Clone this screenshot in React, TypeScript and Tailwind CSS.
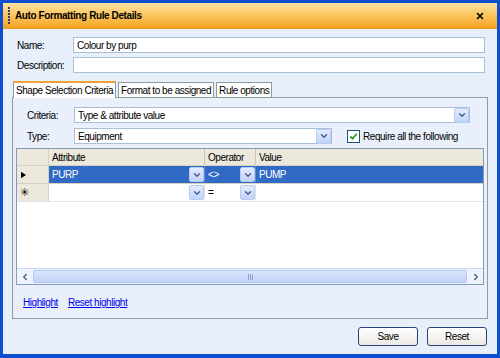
import { ChevronDown, ChevronLeft, ChevronRight, X } from 'lucide-react'

function DropBtn() {
  return (
    <div className="w-[15px] h-[15px] shrink-0 flex items-center justify-center bg-gradient-to-b from-[#e3ecfd] to-[#c1d3fb] border border-[#b7cbf5] rounded-[2px]">
      <ChevronDown className="w-[10px] h-[10px] text-[#4d6185]" strokeWidth={3.5} />
    </div>
  )
}

function Field({ label, value }: { label: string; value: string }) {
  return (
    <div className="flex items-center h-[16px]">
      <span className="w-[56px] shrink-0 whitespace-nowrap">{label}</span>
      <div className="flex-1 h-[16px] bg-white border border-[#a9bfd6] flex items-center pl-[3px]">
        <span className="flex-1">{value}</span>
      </div>
    </div>
  )
}

export default function App() {
  return (
    <div
      className="w-[500px] h-[358px] bg-[#0d4fd0] p-[3px] pb-[4px] text-[10px] tracking-[-0.45px] text-black"
      style={{ fontFamily: '"Liberation Sans", Arial, sans-serif' }}
    >
      <div className="h-full flex flex-col bg-[#e7effb]">
        {/* barra de titulo */}
        <div className="h-[26px] shrink-0 flex items-center bg-gradient-to-b from-[#fee3a0] via-[#fbc45a] to-[#f3a41e] border-b border-[#e39a22] pl-[5px] pr-[12px]">
          <div className="flex flex-col gap-[1px] mr-[5px]">
            {[0, 1, 2, 3, 4, 5].map((i) => (
              <div key={i} className="w-[2px] h-[2px] bg-[#3a3a78]" />
            ))}
          </div>
          <span className="font-bold flex-1 text-[10px] tracking-[-0.4px]">Auto Formatting Rule Details</span>
          <X className="w-[10px] h-[10px]" strokeWidth={4} />
        </div>

        <div className="flex-1 flex flex-col px-[9px] pt-[8px] pb-[8px]">
          <div className="flex flex-col gap-[4px] pl-[5px] pr-[3px]">
            <Field label="Name:" value="Colour by purp" />
            <Field label="Description:" value="" />
          </div>

          {/* abas */}
          <div className="flex items-end mt-[7px] h-[17px] pl-[1px]">
            <div className="h-[17px] px-[2px] bg-white border border-[#919b9c] border-b-0 border-t-[2px] border-t-[#f0a336] flex items-center relative z-10 -mb-px whitespace-nowrap">
              Shape Selection Criteria
            </div>
            <div className="h-[15px] px-[2px] ml-[2px] bg-white border border-[#919b9c] border-b-0 flex items-center whitespace-nowrap">
              Format to be assigned
            </div>
            <div className="h-[15px] px-[2px] ml-[2px] bg-white border border-[#919b9c] border-b-0 flex items-center whitespace-nowrap">
              Rule options
            </div>
          </div>

          <div className="flex-1 border border-[#919b9c] bg-[#e9f0fb] flex flex-col px-[3px] pt-[9px] pb-[8px]">
            <div className="pl-[11px] pr-[14px]">
              <div className="flex items-center h-[16px]">
                <span className="w-[47px] shrink-0">Criteria:</span>
                <div className="flex-1 h-[16px] bg-white border border-[#a9bfd6] flex items-center pl-[3px]">
                  <span className="flex-1">Type &amp; attribute value</span>
                  <DropBtn />
                </div>
              </div>
              <div className="flex items-center h-[16px] mt-[5px]">
                <span className="w-[47px] shrink-0">Type:</span>
                <div className="w-[258px] h-[16px] bg-white border border-[#a9bfd6] flex items-center pl-[3px]">
                  <span className="flex-1">Equipment</span>
                  <DropBtn />
                </div>
                <div className="ml-[15px] flex items-center gap-[3px] whitespace-nowrap">
                  <div className="w-[13px] h-[13px] bg-white border border-[#1c5180] flex items-center justify-center">
                    <svg viewBox="0 0 10 10" className="w-[9px] h-[9px]">
                      <path d="M1.5 5 L4 7.5 L8.5 2" stroke="#21a121" strokeWidth="2" fill="none" />
                    </svg>
                  </div>
                  <span>Require all the following</span>
                </div>
              </div>
            </div>

            {/* grade */}
            <div className="flex-1 mt-[4px] bg-white border border-[#7f9db9] flex flex-col">
              <div className="h-[17px] flex bg-[#ece8dc] border-b border-[#d6d2c2]">
                <div className="w-[32px] border-r border-[#d6d2c2]" />
                <div className="w-[156px] pl-[3px] flex items-center border-r border-[#c9c5b6]">Attribute</div>
                <div className="w-[51px] pl-[3px] flex items-center border-r border-[#c9c5b6]">Operator</div>
                <div className="flex-1 pl-[3px] flex items-center">Value</div>
              </div>
              <div className="h-[18px] flex border-b border-[#d6d2c2]">
                <div className="w-[32px] bg-[#ece8dc] border-r border-[#d6d2c2] flex items-center pl-[4px]">
                  <svg viewBox="0 0 6 8" className="w-[5px] h-[8px]">
                    <path d="M0 0 L6 4 L0 8 Z" fill="#000" />
                  </svg>
                </div>
                <div className="flex-1 flex bg-[#316ac5] text-white">
                  <div className="w-[156px] pl-[3px] flex items-center border-r border-[#5d8bd6]">
                    <span className="flex-1">PURP</span>
                    <DropBtn />
                  </div>
                  <div className="w-[51px] pl-[3px] flex items-center border-r border-[#5d8bd6]">
                    <span className="flex-1">&lt;&gt;</span>
                    <DropBtn />
                  </div>
                  <div className="flex-1 pl-[3px] flex items-center">PUMP</div>
                </div>
              </div>
              <div className="h-[18px] flex border-b border-[#e3e3e3]">
                <div className="w-[32px] bg-[#ece8dc] border-r border-[#d6d2c2] flex items-center pl-[3px] text-[11px]">
                  ✳
                </div>
                <div className="w-[156px] pl-[3px] flex items-center border-r border-[#e3e3e3]">
                  <span className="flex-1" />
                  <DropBtn />
                </div>
                <div className="w-[51px] pl-[3px] flex items-center border-r border-[#e3e3e3]">
                  <span className="flex-1">=</span>
                  <DropBtn />
                </div>
                <div className="flex-1" />
              </div>
              <div className="flex-1" />
              <div className="h-[16px] flex items-center bg-[#eef3fd] border-t border-[#c7d6f3]">
                <div className="w-[15px] h-[15px] flex items-center justify-center">
                  <ChevronLeft className="w-[10px] h-[10px] text-[#4d6185]" strokeWidth={3.5} />
                </div>
                <div className="flex-1 h-[13px] mx-[1px] bg-gradient-to-b from-[#d9e4fd] to-[#c3d3f8] border border-[#b3c7f3] rounded-[2px] flex items-center justify-center">
                  <div className="flex gap-[1px]">
                    <div className="w-px h-[6px] bg-[#8aa4d8]" />
                    <div className="w-px h-[6px] bg-[#8aa4d8]" />
                    <div className="w-px h-[6px] bg-[#8aa4d8]" />
                  </div>
                </div>
                <div className="w-[15px] h-[15px] flex items-center justify-center">
                  <ChevronRight className="w-[10px] h-[10px] text-[#4d6185]" strokeWidth={3.5} />
                </div>
              </div>
            </div>

            <div className="flex gap-[10px] mt-[10px] pl-[7px]">
              <a className="text-[#0000ee] underline">Highlight</a>
              <a className="text-[#0000ee] underline">Reset highlight</a>
            </div>
          </div>

          <div className="flex justify-end gap-[9px] mt-[8px] pr-[1px]">
            <button className="w-[60px] h-[19px] rounded-[3px] border border-[#28437a] bg-gradient-to-b from-white to-[#ece9e2]">
              Save
            </button>
            <button className="w-[60px] h-[19px] rounded-[3px] border border-[#28437a] bg-gradient-to-b from-white to-[#ece9e2]">
              Reset
            </button>
          </div>
        </div>
      </div>
    </div>
  )
}
